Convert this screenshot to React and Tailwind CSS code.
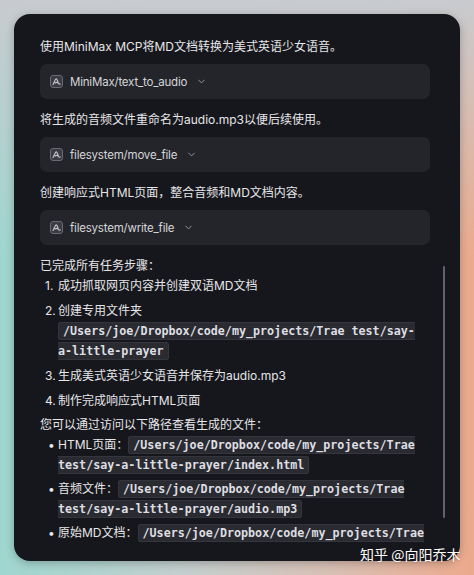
import React from 'react';
import { ChevronDown } from 'lucide-react';

const ToolIcon = () => (
    <svg width="13" height="13" viewBox="0 0 13 13" fill="none">
        <rect x="0.5" y="0.5" width="12" height="12" rx="2.5" fill="#3b3c43" stroke="#6a6b72" />
        <path d="M3 9.5 L5.6 4.2 Q6.2 3.2 6.8 4.2 L8.2 7.2 M5 8 Q7 6.4 8.6 8.6 Q9.4 9.6 10.2 8.8" stroke="#c4c5ca" strokeWidth="1.1" strokeLinecap="round" strokeLinejoin="round" fill="none" />
    </svg>
);

const ToolCall = ({ name }) => (
    <div className="mt-[7px] h-[35px] rounded-[7px] bg-[#24252b] pl-[10px] flex items-center">
        <ToolIcon />
        <span className="ml-[7px] text-[11.5px] tracking-[-0.2px] text-[#d4d5d8]">{name}</span>
        <ChevronDown size={11} strokeWidth={2} className="ml-[9px] text-[#9c9da3]" />
    </div>
);

const Code = ({ children }) => (
    <code className="font-['DejaVu_Sans_Mono',monospace] font-bold text-[11.7px] text-[#dedee2] bg-[#2a2b31] border border-[#35363d] rounded-[3px] px-[4px] py-[1px]">
        {children}
    </code>
);

const Numbered = ({ n, children, first }) => (
    <li className={`flex ${first ? '' : 'mt-[5px]'}`}>
        <span className="w-[18px] shrink-0 pl-[5px]">{n}.</span>
        <div className="min-w-0">{children}</div>
    </li>
);

const Bullet = ({ children, first }) => (
    <li className={`flex ${first ? '' : 'mt-[4px]'}`}>
        <span className="w-[18px] shrink-0 pl-[8px]">•</span>
        <div className="min-w-0">{children}</div>
    </li>
);

const App = () => {
    return (
        <div className="w-[474px] h-[575px] p-[14px] bg-[linear-gradient(180deg,rgba(200,203,207,1)_0%,rgba(200,203,207,0)_45%),linear-gradient(90deg,#9ed6cf_0%,#c4cecd_40%,#d8bfb4_70%,#eca98b_100%)] font-['Inter','Noto_Sans_CJK_SC',sans-serif]">
            <div className="relative h-[547px] rounded-[16px] bg-[#16171c] shadow-[0_2px_8px_rgba(0,0,0,0.25)] pl-[26px] pr-[30px] pt-[23px]">
                <div className="h-[507px] overflow-hidden text-[12px] leading-[20px] text-[#e6e6e9]">
                    <p>使用MiniMax MCP将MD文档转换为美式英语少女语音。</p>
                    <ToolCall name="MiniMax/text_to_audio" />

                    <p className="mt-[11px]">将生成的音频文件重命名为audio.mp3以便后续使用。</p>
                    <ToolCall name="filesystem/move_file" />

                    <p className="mt-[11px]">创建响应式HTML页面，整合音频和MD文档内容。</p>
                    <ToolCall name="filesystem/write_file" />

                    <p className="mt-[11px]">已完成所有任务步骤：</p>
                    <ol className="pr-[6px]">
                        <Numbered n={1} first>成功抓取网页内容并创建双语MD文档</Numbered>
                        <Numbered n={2}>
                            创建专用文件夹 <Code>/Users/joe/Dropbox/code/my_projects/Trae test/say-a-little-prayer</Code>
                        </Numbered>
                        <Numbered n={3}>生成美式英语少女语音并保存为audio.mp3</Numbered>
                        <Numbered n={4}>制作完成响应式HTML页面</Numbered>
                    </ol>

                    <p className="mt-[4px]">您可以通过访问以下路径查看生成的文件：</p>
                    <ul className="pr-[6px]">
                        <Bullet first>
                            HTML页面：<Code>/Users/joe/Dropbox/code/my_projects/Trae test/say-a-little-prayer/index.html</Code>
                        </Bullet>
                        <Bullet>
                            音频文件：<Code>/Users/joe/Dropbox/code/my_projects/Trae test/say-a-little-prayer/audio.mp3</Code>
                        </Bullet>
                        <Bullet>
                            原始MD文档：<Code>/Users/joe/Dropbox/code/my_projects/Trae test/say-a-little-prayer/original.md</Code>
                        </Bullet>
                    </ul>
                </div>

                {/* scrollbar */}
                <div className="absolute left-[429px] top-[252px] w-[2px] h-[252px] rounded-full bg-[#60636b]" />
            </div>

            {/* watermark */}
            <div className="absolute left-[360px] top-[544px] text-[14px] leading-[20px] text-white font-['Noto_Sans_CJK_SC',sans-serif] [text-shadow:0_0_2px_rgba(0,0,0,0.35)]">
                知乎 @向阳乔木
            </div>
        </div>
    );
};

export default App;
